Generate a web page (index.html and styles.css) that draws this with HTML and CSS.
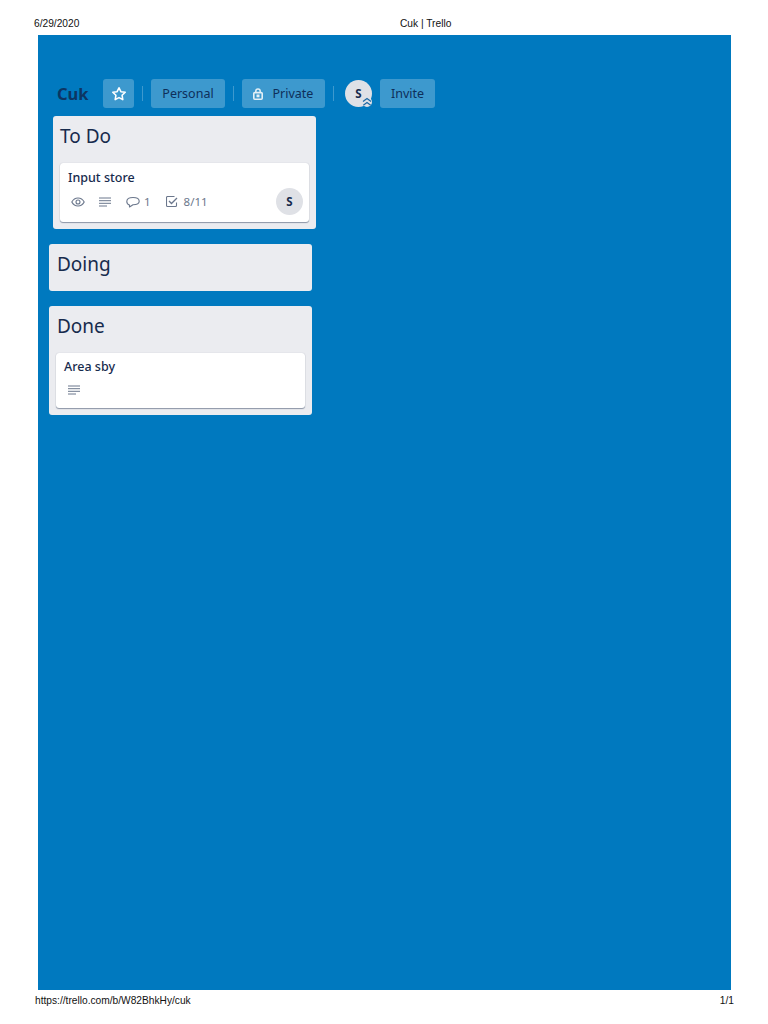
FILE: index.html
```html
<!DOCTYPE html>
<html lang="en">
<head>
<meta charset="utf-8">
<title>Cuk | Trello</title>
<link rel="stylesheet" href="styles.css">
</head>
<body>
<div class="page">
  <header class="print-head">
    <span class="print-date">6/29/2020</span>
    <span class="print-title">Cuk | Trello</span>
  </header>
  <main class="board">
    <div class="toolbar">
      <h1 class="board-name">Cuk</h1>
      <button class="btn btn-star" aria-label="Star">
        <svg width="16" height="16" viewBox="0 0 16 16"><path d="M8 1.800l1.900 3.900 4.300.6-3.100 3 .7 4.300L8 11.600l-3.800 2 .7-4.300-3.100-3 4.300-.6z" fill="none" stroke="#fff" stroke-width="1.600" stroke-linejoin="round"/></svg>
      </button>
      <span class="divider"></span>
      <button class="btn btn-personal">Personal</button>
      <span class="divider"></span>
      <button class="btn btn-private">
        <svg width="10" height="12" viewBox="0 0 10 12"><path d="M2.800 5V3.200a2.200 2.200 0 0 1 4.400 0V5" fill="none" stroke="#e4f0f6" stroke-width="1.500"/><rect x=".8" y="4.600" width="8.400" height="6.600" rx="1" fill="none" stroke="#e4f0f6" stroke-width="1.600"/><rect x="3.500" y="6.500" width="3" height="2.800" fill="#e4f0f6"/></svg>
        <span>Private</span>
      </button>
      <span class="divider divider-last"></span>
      <div class="member">
        <span class="member-initial">S</span>
        <svg class="member-badge" width="10" height="10" viewBox="0 0 10 10"><path d="M1 4.500l4-3 4 3M1 8.500l4-3 4 3" fill="none" stroke="#1f6aa5" stroke-width="1.200"/></svg>
      </div>
      <button class="btn btn-invite">Invite</button>
    </div>

    <section class="list list-todo">
      <h2 class="list-title">To Do</h2>
      <article class="card card-todo">
        <div class="card-name">Input store</div>
        <div class="badges">
          <svg class="ico ico-eye" width="14" height="10" viewBox="0 0 14 10"><path d="M.8 5C2.200 2.400 4.400 1 7 1s4.800 1.400 6.200 4C11.800 7.600 9.600 9 7 9S2.200 7.600.8 5z" fill="none" stroke="#6b778c" stroke-width="1.100"/><circle cx="7" cy="5" r="2" fill="none" stroke="#6b778c" stroke-width="1.100"/></svg>
          <svg class="ico ico-desc" width="12" height="10" viewBox="0 0 12 10"><path d="M0 1h12M0 3.700h12M0 6.300h12M0 9h8" stroke="#6b778c" stroke-width="1"/></svg>
          <svg class="ico ico-comment" width="14" height="12" viewBox="0 0 14 12"><path d="M3.500 9C1.800 8.500.8 7.300.8 5.500.8 3 3 1.500 7 1.500s6.200 1.500 6.200 3.800S11 8.800 7 8.800L3.500 11z" fill="none" stroke="#6b778c" stroke-width="1.100" stroke-linejoin="round"/></svg>
          <span class="count count-comment">1</span>
          <svg class="ico ico-check" width="12" height="12" viewBox="0 0 12 12"><path d="M10.500 6.500v3a1 1 0 0 1-1 1h-8a1 1 0 0 1-1-1v-8a1 1 0 0 1 1-1h7" fill="none" stroke="#6b778c" stroke-width="1.100"/><path d="M3 5l2.500 2.500L11 2" fill="none" stroke="#6b778c" stroke-width="1.300"/></svg>
          <span class="count">8/11</span>
          <span class="avatar">S</span>
        </div>
      </article>
    </section>

    <section class="list list-doing">
      <h2 class="list-title">Doing</h2>
    </section>

    <section class="list list-done">
      <h2 class="list-title title-done">Done</h2>
      <article class="card card-done">
        <div class="card-name">Area sby</div>
        <div class="badges badges-done">
          <svg class="ico ico-desc" width="12" height="10" viewBox="0 0 12 10"><path d="M0 1h12M0 3.700h12M0 6.300h12M0 9h8" stroke="#6b778c" stroke-width="1"/></svg>
        </div>
      </article>
    </section>
  </main>
  <footer class="print-foot">
    <span>https://trello.com/b/W82BhkHy/cuk</span>
    <span>1/1</span>
  </footer>
</div>
</body>
</html>
```
FILE: styles.css
```css
html, body { margin: 0; padding: 0; background: #fff; }
.page { width: 768px; height: 1024px; display: flex; flex-direction: column; overflow: hidden; }

.print-head, .print-foot {
  font-family: "Liberation Sans", Arial, sans-serif;
  font-size: 10.200px;
  color: #111;
  display: flex;
}
.print-head { height: 35px; padding: 18px 0 0 34px; box-sizing: border-box; line-height: 11px; }
.print-date { width: 366px; }
.print-foot { height: 34px; padding: 5px 34px 0 35px; box-sizing: border-box; justify-content: space-between; line-height: 11px; }

.board {
  flex: 1;
  margin: 0 37px 0 38px;
  background: #0079bf;
  padding-top: 44px;
  font-family: "Noto Sans", sans-serif;
  color: #172b4d;
  min-height: 0;
}

.toolbar { display: flex; align-items: center; height: 29px; padding-left: 19px; }
.board-name { margin: 0; font-size: 16.500px; font-weight: 700; color: #0c3563; width: 46px; line-height: 29px; }
.btn {
  height: 29px;
  border: 0;
  border-radius: 3px;
  background: rgba(255, 255, 255, .24);
  color: #0e2f5a;
  font: 400 12.500px/29px "Noto Sans", sans-serif;
  padding: 0;
  display: flex;
  align-items: center;
  justify-content: center;
}
.btn-star { width: 31px; }
.btn-personal { width: 74px; }
.btn-private { width: 83px; gap: 10px; padding-right: 1px; }
.btn-invite { width: 55px; }
.divider { width: 1px; height: 15px; background: rgba(255, 255, 255, .24); margin: 0 8px; }
.divider-last { margin: 0 11px 0 8px; }
.member {
  position: relative;
  width: 27px;
  height: 27px;
  border-radius: 50%;
  background: #dfe1e6;
  margin-right: 8px;
  display: flex;
  align-items: center;
  justify-content: center;
  font-size: 11.500px;
  font-weight: 700;
  color: #172b4d;
}
.member-badge { position: absolute; right: 0; bottom: 0; background: #dfe1e6; border-radius: 50%; }

.list { width: 263px; background: #ebecf0; border-radius: 3px; box-sizing: border-box; }
.list-todo { margin: 8px 0 0 15px; height: 113px; padding: 6px 7px 0; }
.list-doing { margin: 15px 0 0 11px; height: 47px; padding: 6px 8px 0; }
.list-done { margin: 15px 0 0 11px; height: 109px; padding: 6px 7px 0; }
.list-title { margin: 0; font-size: 19px; font-weight: 400; line-height: 28px; color: #172b4d; }
.title-done { padding-left: 1px; }
.list-done .list-title { margin-bottom: 13px; }
.list-todo .list-title { margin-bottom: 13px; }

.card {
  background: #fff;
  border-radius: 3px;
  box-shadow: 0 1px 1px rgba(9, 30, 66, .4), 0 0 1px rgba(9, 30, 66, .25);
  box-sizing: border-box;
  padding: 6px 8px 0;
}
.card-todo { height: 59px; }
.card-done { height: 55px; padding-top: 5px; }
.card-name { font-size: 12.500px; line-height: 18px; font-weight: 500; color: #172b4d; }
.badges { display: flex; align-items: center; height: 27px; margin-top: 1px; padding-left: 3px; font-size: 11.500px; color: #6b778c; position: relative; }
.badges-done { height: 16px; margin-top: 6px; padding-left: 0; }
.ico { flex: none; }
.ico-eye { margin-right: 14px; }
.ico-desc { margin-right: 15px; }
.badges-done .ico-desc { margin-left: 4px; }
.ico-comment { margin-right: 4px; }
.count-comment { margin-right: 15px; }
.ico-check { margin-right: 6px; }
.avatar {
  margin-left: auto;
  margin-right: -2px;
  width: 27px;
  height: 27px;
  border-radius: 50%;
  background: #dfe1e6;
  display: flex;
  align-items: center;
  justify-content: center;
  font-size: 11.500px;
  font-weight: 700;
  color: #172b4d;
}
```
